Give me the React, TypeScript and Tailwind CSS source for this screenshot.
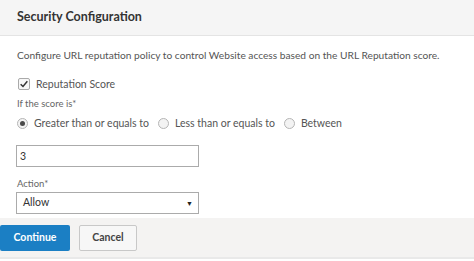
import { useState } from "react";

const options = [
  { id: "gte", label: "Greater than or equals to" },
  { id: "lte", label: "Less than or equals to" },
  { id: "between", label: "Between" },
];

function Radio({ checked }: { checked: boolean }) {
  return (
    <span className="flex h-[11px] w-[11px] items-center justify-center rounded-full border border-[#b5b5b5] bg-[#f3f3f3]">
      {checked && <span className="h-[5px] w-[5px] rounded-full bg-[#4a4a4a]" />}
    </span>
  );
}

export default function App() {
  const [mode, setMode] = useState("gte");

  return (
    <div className="h-[261px] w-[474px] bg-white font-['Lato',sans-serif] text-[#555]">
      <header className="flex h-[36px] items-center border-b border-[#e4e4e4] bg-[#f5f5f5] pl-[17px]">
        <h1 className="text-[12.5px] font-bold text-[#333]">Security Configuration</h1>
      </header>

      <section className="px-[17px]">
        <p className="mt-[12px] text-[10.2px] leading-[14px]">
          Configure URL reputation policy to control Website access based on the URL Reputation score.
        </p>

        <label className="mt-[16px] flex items-center gap-[6px] text-[10.5px] leading-[12px]">
          <span className="ml-[1px] flex h-[12px] w-[12px] items-center justify-center rounded-[2px] border border-[#aaa] bg-[#f7f7f7]">
            <svg viewBox="0 0 12 12" className="h-[10px] w-[10px]">
              <path d="M2 6.2 L4.8 9 L10 2.8" fill="none" stroke="#333" strokeWidth="1.8" />
            </svg>
          </span>
          Reputation Score
        </label>

        <div className="mt-[8px] text-[9.5px] leading-[12px] text-[#666]">If the score is*</div>

        <div className="mt-[7px] flex items-center text-[10.5px] leading-[12px]">
          {options.map((o) => (
            <button
              key={o.id}
              onClick={() => setMode(o.id)}
              className="mr-[9px] flex items-center gap-[6px]"
            >
              <Radio checked={mode === o.id} />
              {o.label}
            </button>
          ))}
        </div>

        <input
          defaultValue="3"
          className="-ml-px mt-[16px] block h-[22px] w-[183px] border border-[#ababab] px-[3px] text-[10.5px] text-[#333] outline-none"
        />

        <div className="mt-[11px] text-[9.5px] leading-[12px] text-[#666]">Action*</div>

        <div className="-ml-px mt-[2px] flex h-[22px] w-[183px] items-center justify-between border border-[#ababab] pl-[6px] pr-[5px] text-[10.5px] text-[#333]">
          <span>Allow</span>
          <span className="text-[7px] text-[#222]">▼</span>
        </div>
      </section>

      <footer className="mt-[4px] flex h-[41px] items-center gap-[9px] border-b-2 border-[#e9e9e9] bg-[#f4f3f2]">
        <button className="h-[26px] w-[70px] rounded-[2px] bg-[#1b7fc4] text-[10.5px] font-bold text-white">
          Continue
        </button>
        <button className="h-[26px] w-[58px] rounded-[2px] border border-[#c8c8c8] bg-[#f7f7f7] text-[10.5px] font-bold text-[#444]">
          Cancel
        </button>
      </footer>
    </div>
  );
}
